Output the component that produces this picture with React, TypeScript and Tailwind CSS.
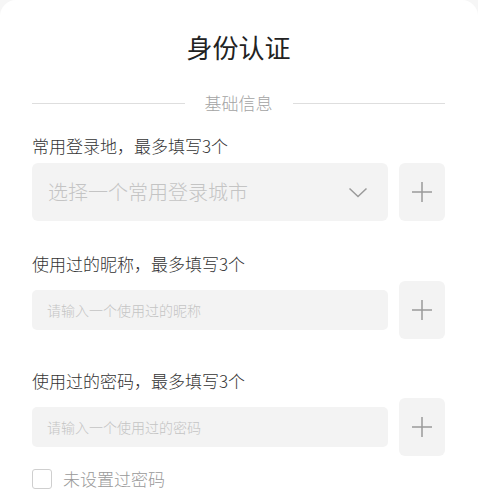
const FONT = { fontFamily: '"Noto Sans CJK SC", "Noto Sans", sans-serif' };

/* ── Icons ───────────────────────────────────────────────────────────────── */
function PlusIcon() {
  return (
    <svg width="22" height="22" viewBox="0 0 22 22" fill="none" stroke="#9a9a9a" strokeWidth="1.5">
      <path d="M11 1v20M1 11h20" />
    </svg>
  );
}

function ChevronIcon() {
  return (
    <svg width="20" height="11" viewBox="0 0 20 11" fill="none" stroke="#9a9a9a" strokeWidth="1.5">
      <path d="M1.5 1.5 10 9.5l8.5-8" />
    </svg>
  );
}

/* ── Add button ──────────────────────────────────────────────────────────── */
function AddButton() {
  return (
    <button className="flex h-[58px] w-[46px] shrink-0 items-center justify-center rounded-[6px] bg-[#f3f3f3]">
      <PlusIcon />
    </button>
  );
}

/* ── Field row ───────────────────────────────────────────────────────────── */
function FieldRow({ label, placeholder }: { label: string; placeholder: string }) {
  return (
    <>
      <div className="mt-[30px] text-[17px] leading-[24px] font-light text-[#333]">{label}</div>
      <div className="mt-[5px] flex items-center gap-[11px]">
        <div className="flex h-[40px] flex-1 items-center rounded-[5px] bg-[#f3f3f3] px-[15px] text-[14px] font-light text-[#c4c4c4]">
          {placeholder}
        </div>
        <AddButton />
      </div>
    </>
  );
}

export default function App() {
  return (
    <div className="h-[503px] w-[478px] bg-[#f6f6f6]" style={FONT}>
      <div className="flex h-full flex-col rounded-t-[16px] bg-white px-[32px] pr-[33px]">
        {/* Title */}
        <h1 className="pt-[29px] text-center text-[26px] leading-[36px] font-normal text-[#222]">
          身份认证
        </h1>

        {/* Divider */}
        <div className="mt-[26px] flex items-center gap-[20px]">
          <div className="h-px flex-1 bg-[#dedede]" />
          <span className="text-[17px] leading-[24px] font-light text-[#a3a3a3]">基础信息</span>
          <div className="h-px flex-1 bg-[#dedede]" />
        </div>

        {/* Login city */}
        <div className="mt-[19px] text-[17px] leading-[24px] font-light text-[#333]">常用登录地，最多填写3个</div>
        <div className="mt-[5px] flex items-center gap-[11px]">
          <div className="flex h-[58px] flex-1 items-center justify-between rounded-[6px] bg-[#f3f3f3] pl-[16px] pr-[20px]">
            <span className="text-[20px] font-light text-[#c4c4c4]">选择一个常用登录城市</span>
            <ChevronIcon />
          </div>
          <AddButton />
        </div>

        <div className="mt-px" />
        <FieldRow label="使用过的昵称，最多填写3个" placeholder="请输入一个使用过的昵称" />
        <FieldRow label="使用过的密码，最多填写3个" placeholder="请输入一个使用过的密码" />

        {/* Checkbox */}
        <label className="mt-[11px] flex items-center gap-[11px]">
          <span className="h-[20px] w-[20px] rounded-[3px] border border-[#cfcfcf] bg-white" />
          <span className="text-[17px] leading-[24px] font-light text-[#999]">未设置过密码</span>
        </label>
      </div>
    </div>
  );
}
